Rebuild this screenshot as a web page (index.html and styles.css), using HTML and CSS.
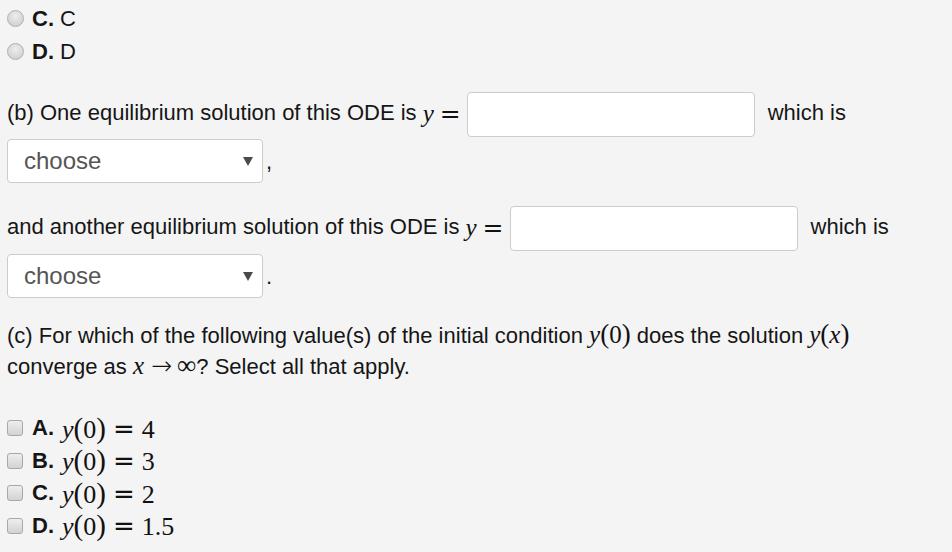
FILE: index.html
```html
<!DOCTYPE html>
<html>
<head>
<meta charset="utf-8">
<link rel="stylesheet" href="styles.css">
</head>
<body>
<div class="page">
  <div class="radio-list">
    <div class="opt"><span class="radio"></span><b class="lbl">C.</b><span>C</span></div>
    <div class="opt"><span class="radio"></span><b class="lbl">D.</b><span>D</span></div>
  </div>

  <div class="row row-b1">
    <span>(b) One equilibrium solution of this ODE is</span>
    <span class="math"><span class="mi">y</span><span class="mo">=</span></span>
    <span class="input"></span>
    <span class="after">which is</span>
  </div>
  <div class="row sel-row sel1">
    <div class="select"><span>choose</span><span class="arrow"></span></div>
    <span class="punct">,</span>
  </div>

  <div class="row row-b2">
    <span>and another equilibrium solution of this ODE is</span>
    <span class="math"><span class="mi">y</span><span class="mo">=</span></span>
    <span class="input"></span>
    <span class="after">which is</span>
  </div>
  <div class="row sel-row sel2">
    <div class="select"><span>choose</span><span class="arrow"></span></div>
    <span class="punct">.</span>
  </div>

  <p class="part-c">(c) For which of the following value(s) of the initial condition <span class="math"><span class="mi">y</span><span class="mp">(</span><span class="mn">0</span><span class="mp">)</span></span> does the solution <span class="math"><span class="mi">y</span><span class="mp">(</span><span class="mi">x</span><span class="mp">)</span></span><br>converge as <span class="math"><span class="mi">x</span><span class="arr">→</span><span class="mn inf">∞</span></span>? Select all that apply.</p>

  <div class="check-list">
    <div class="opt"><span class="check"></span><b class="lbl">A.</b><span class="math big"><span class="mi">y</span><span class="mp">(</span><span class="mn">0</span><span class="mp">)</span><span class="mo">=</span><span class="mn">4</span></span></div>
    <div class="opt"><span class="check"></span><b class="lbl">B.</b><span class="math big"><span class="mi">y</span><span class="mp">(</span><span class="mn">0</span><span class="mp">)</span><span class="mo">=</span><span class="mn">3</span></span></div>
    <div class="opt"><span class="check"></span><b class="lbl">C.</b><span class="math big"><span class="mi">y</span><span class="mp">(</span><span class="mn">0</span><span class="mp">)</span><span class="mo">=</span><span class="mn">2</span></span></div>
    <div class="opt"><span class="check"></span><b class="lbl">D.</b><span class="math big"><span class="mi">y</span><span class="mp">(</span><span class="mn">0</span><span class="mp">)</span><span class="mo">=</span><span class="mn">1.5</span></span></div>
  </div>
</div>
</body>
</html>
```

FILE: styles.css
```css
html, body {
  margin: 0;
  padding: 0;
  background: #f4f4f4;
}
body {
  font-family: "Liberation Sans", Arial, sans-serif;
  font-size: 22px;
  color: #161616;
}
.page {
  padding: 2px 7px 0 7px;
}
.opt {
  display: flex;
  align-items: center;
  height: 33px;
  white-space: nowrap;
}
.radio {
  box-sizing: border-box;
  width: 17px;
  height: 17px;
  border-radius: 50%;
  border: 1px solid #b0b0b0;
  background: radial-gradient(circle at 50% 35%, #ededed 0%, #d6d6d6 65%, #c8c8c8 100%);
  margin-right: 8px;
  flex: none;
}
.lbl {
  font-weight: bold;
  margin-right: 6px;
}
.row {
  display: flex;
  align-items: center;
  white-space: nowrap;
}
.row-b1 {
  margin-top: 24px;
  height: 45px;
}
.row-b2 {
  margin-top: 23px;
  height: 45px;
}
.row > span:first-child {
  margin-top: -3px;
}
.math {
  font-family: "Liberation Serif", "Times New Roman", serif;
  font-size: 25px;
  color: #111;
}
.row .math {
  margin-left: 6px;
  margin-top: -3px;
}
.mi {
  font-style: italic;
}
.mo {
  font-family: "DejaVu Sans", sans-serif;
  font-size: 25px;
  padding: 0 4px;
}
.row .mo {
  padding: 0 0 0 6px;
}
.mp {
  font-size: 27px;
}
.arr {
  font-family: "DejaVu Sans", sans-serif;
  font-size: 25px;
  font-weight: 300;
  padding: 0 5px 0 7px;
}
.inf {
  font-size: 27px;
}
.input {
  box-sizing: border-box;
  width: 288px;
  height: 45px;
  border: 1px solid #cccccc;
  border-radius: 4px;
  background: #fff;
  margin-left: 6px;
  flex: none;
}
.after {
  margin-left: 13px;
  margin-top: -3px;
}
.sel-row {
  height: 44px;
}
.sel1 {
  margin-top: 2px;
}
.sel2 {
  margin-top: 3px;
}
.select {
  box-sizing: border-box;
  width: 256px;
  height: 44px;
  border: 1px solid #cccccc;
  border-radius: 4px;
  background: #fff;
  display: flex;
  align-items: center;
  justify-content: space-between;
  padding: 0 9px 0 16px;
  color: #555;
  font-size: 24px;
}
.arrow {
  width: 0;
  height: 0;
  border-left: 5px solid transparent;
  border-right: 5px solid transparent;
  border-top: 9px solid #4a4a4a;
}
.punct {
  margin-left: 3px;
  align-self: flex-end;
  margin-bottom: 8px;
}
.part-c {
  margin: 22px 0 0 0;
  line-height: 31px;
}
.part-c .math {
  font-size: 25px;
  line-height: 1;
}
.part-c .math span {
  line-height: 1;
}
.check-list {
  margin-top: 30px;
}
.check-list .opt {
  height: 32.5px;
}
.check {
  box-sizing: border-box;
  width: 16px;
  height: 16px;
  border: 1px solid #a8a8a8;
  border-radius: 3px;
  background: linear-gradient(#eeeeee, #d2d2d2);
  margin-right: 9px;
  flex: none;
}
.big {
  font-size: 26px;
  margin-left: 2px;
}
.big .mp {
  font-size: 29px;
}
.big .mo {
  font-size: 26px;
  padding: 0 7px;
}
```
